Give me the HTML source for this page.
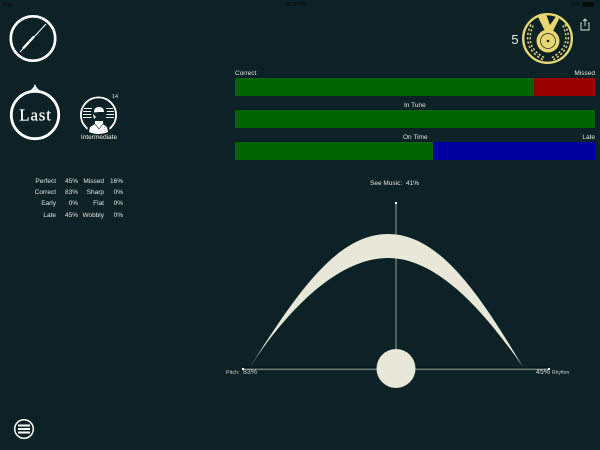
<!DOCTYPE html>
<html>
<head>
<meta charset="utf-8">
<style>
html,body{margin:0;padding:0;background:#0c2226;}
#p{position:relative;width:600px;height:450px;overflow:hidden;background:#0c2226;font-family:"Liberation Sans",sans-serif;color:#e8e8e0;}
.t{position:absolute;font-size:6.5px;line-height:8px;white-space:nowrap;color:#e4e4dc;}
.b{position:absolute;height:18px;}
.r{text-align:right;}
</style>
</head>
<body>
<div id="p">
<div class="t" style="left:3px;top:1px;font-size:5px;color:#030d0e;">iPad</div>
<div class="t" style="left:285px;top:1px;font-size:5px;color:#030d0e;">10:38 PM</div>
<div class="t" style="left:570px;top:1px;font-size:5px;color:#030d0e;width:12px;">92%</div>
<div style="position:absolute;left:583px;top:2px;width:11px;height:5px;background:#030d0e;"></div>

<svg style="position:absolute;left:0;top:0" width="600" height="450" viewBox="0 0 600 450">
  <!-- jack icon -->
  <circle cx="33" cy="38.500" r="22.200" fill="none" stroke="#fff" stroke-width="2.600"/>
  <path d="M20 52 L46 24" fill="none" stroke="#fff" stroke-width="1"/>
  <path d="M23 48.500 L34 36.500" stroke="#fff" stroke-width="2.400" fill="none"/>

  <!-- Last -->
  <circle cx="35" cy="115" r="23.700" fill="none" stroke="#fff" stroke-width="2.800"/>
  <path d="M27 92 Q33 90 35 84 Q37 90 43 92 Z" fill="#fff"/>
  <text x="35.500" y="120.500" text-anchor="middle" font-family="Liberation Serif,serif" font-size="17" letter-spacing=".8" fill="#fff" stroke="#fff" stroke-width=".2">Last</text>

  <!-- Intermediate -->
  <circle cx="98.500" cy="115" r="17.600" fill="none" stroke="#fff" stroke-width="1.800"/>
  <path d="M84 108.500H113M83 111.500H114M83 114.500H114M83 117.500H114" stroke="#fff" stroke-width="1"/>
  <path d="M87 133 L88 125 L92 122 L91 112 Q92 104 99 104 Q106 104 107 112 L105 122 L109 125 L110 133 Z" fill="#0c2226"/>
  <path d="M94 112.500 Q94 107 99 107 Q104 107 104 112 L99 112 Z" fill="#fff"/>
  <path d="M93 114 L94 119 L96 117 Z" fill="#fff"/>
  <path d="M89 132 L90 127 L95 124 L95 121 L103 121 L103 124 L107 127 L108 132 Q98.500 136 89 132 Z" fill="#fff"/>
  <path d="M95 124 L99 129 L103 124" fill="none" stroke="#0c2226" stroke-width=".6"/>
  <text x="115" y="98" text-anchor="middle" font-size="5.500" fill="#e4e4dc">14</text>
  <text x="99" y="139" text-anchor="middle" font-size="6.500" fill="#f0f0e8">Intermediate</text>

  <!-- medal -->
  <text x="515" y="44" text-anchor="middle" font-size="13" fill="#eeeee8">5</text>
  <circle cx="547.500" cy="38.500" r="24.300" fill="none" stroke="#e8d670" stroke-width="2.400"/>
  <g fill="none" stroke="#e8d670" stroke-width="4" stroke-dasharray="2.200 2">
    <path d="M532 25 Q522 47 544 59"/>
    <path d="M564 25 Q574 47 552 59"/>
  </g>
  <g fill="none" stroke="#0c2226" stroke-width="1">
    <path d="M532 25 Q522 47 544 59"/>
    <path d="M564 25 Q574 47 552 59"/>
  </g>
  <path d="M538 17 L546 14 L550 25 L557 15 L559 19 L552 33 H546 Z" fill="#e8d670"/>
  <circle cx="548" cy="41" r="11.500" fill="#e8d670"/>
  <circle cx="548" cy="41" r="7.500" fill="none" stroke="#0c2226" stroke-width=".7"/>
  <circle cx="548" cy="41" r="1.300" fill="#0c2226"/>

  <!-- share -->
  <path d="M582 23 H581 V30 H589 V23 H588" fill="none" stroke="#e4e4dc" stroke-width=".9"/>
  <path d="M585 26 V19 M583 21 L585 19 L587 21" fill="none" stroke="#e4e4dc" stroke-width=".9"/>

  <!-- chart -->
  <path d="M396 202 V369" stroke="#6d7a70" stroke-width="1.400"/>
  <path d="M243 368 H549" stroke="#050f10" stroke-width="1"/>
  <path d="M243 369.300 H549" stroke="#6d7a70" stroke-width="1.600"/>
  <rect x="242" y="368" width="2" height="2" fill="#fff"/>
  <rect x="548" y="368" width="2" height="2" fill="#fff"/>
  <rect x="395" y="202" width="2" height="2" fill="#fff"/>
  <path d="M250 367 C297 293 337 234 388 234 C439 234 479 293 523 367 C482 308 436 258 388 258 C340 258 290 306 250 367 Z" fill="#e8e8d8"/>
  <circle cx="396" cy="368.500" r="19.500" fill="#e8e8d8"/>

  <!-- menu -->
  <circle cx="24" cy="429" r="9.300" fill="none" stroke="#fff" stroke-width="1.500"/>
  <path d="M18 425.500H30M18 429H30M18 432.500H30" stroke="#fff" stroke-width="2"/>
</svg>

<!-- stats -->
<div class="t r" style="left:20px;top:178px;width:36px;">Perfect</div>
<div class="t r" style="left:20px;top:189px;width:36px;">Correct</div>
<div class="t r" style="left:20px;top:200px;width:36px;">Early</div>
<div class="t r" style="left:20px;top:212px;width:36px;">Late</div>
<div class="t r" style="left:50px;top:178px;width:28px;">45%</div>
<div class="t r" style="left:50px;top:189px;width:28px;">83%</div>
<div class="t r" style="left:50px;top:200px;width:28px;">0%</div>
<div class="t r" style="left:50px;top:212px;width:28px;">45%</div>
<div class="t r" style="left:74px;top:178px;width:30px;">Missed</div>
<div class="t r" style="left:74px;top:189px;width:30px;">Sharp</div>
<div class="t r" style="left:74px;top:200px;width:30px;">Flat</div>
<div class="t r" style="left:74px;top:212px;width:30px;">Wobbly</div>
<div class="t r" style="left:100px;top:178px;width:23px;">16%</div>
<div class="t r" style="left:100px;top:189px;width:23px;">0%</div>
<div class="t r" style="left:100px;top:200px;width:23px;">0%</div>
<div class="t r" style="left:100px;top:212px;width:23px;">0%</div>

<!-- bars -->
<div class="t" style="left:235px;top:70px;">Correct</div>
<div class="t r" style="left:540px;top:70px;width:55px;">Missed</div>
<div class="b" style="left:235px;top:78px;width:299px;background:#006400;"></div>
<div class="b" style="left:534px;top:78px;width:61px;background:#990000;"></div>
<div class="t" style="left:404px;top:102px;">In Tune</div>
<div class="b" style="left:235px;top:110px;width:360px;background:#006400;"></div>
<div class="t" style="left:403px;top:134px;">On Time</div>
<div class="t r" style="left:540px;top:134px;width:55px;">Late</div>
<div class="b" style="left:235px;top:142px;width:198px;background:#006400;"></div>
<div class="b" style="left:433px;top:142px;width:162px;background:#0000a0;"></div>

<div class="t" style="left:370px;top:180px;">See Music:</div>
<div class="t" style="left:406px;top:180px;">41%</div>

<div class="t" style="left:226px;top:369px;font-size:5.500px;color:#c4c8c0;">Pitch:</div>
<div class="t" style="left:243px;top:369px;font-size:7px;color:#c8ccc4;">83%</div>
<div class="t" style="left:536px;top:369px;font-size:7px;color:#d8dcd4;">45%</div>
<div class="t" style="left:552px;top:369px;font-size:5px;color:#c4c8c0;">Rhythm</div>
</div>
</body>
</html>
